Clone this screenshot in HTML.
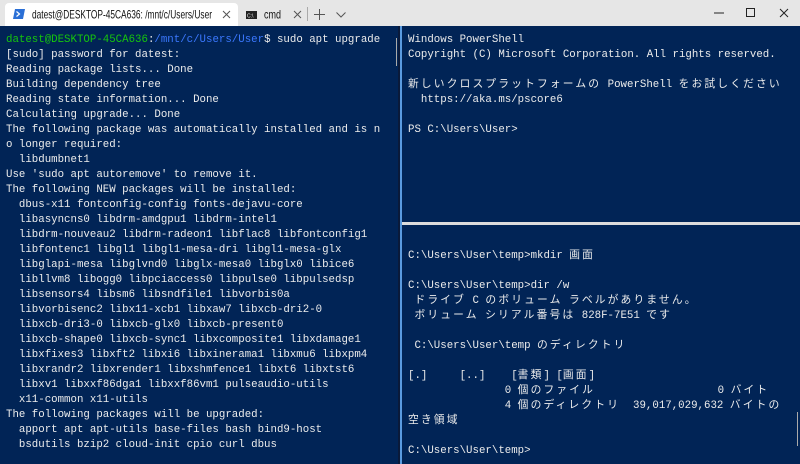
<!DOCTYPE html>
<html><head><meta charset="utf-8"><style>
*{margin:0;padding:0;box-sizing:border-box}
html,body{width:800px;height:464px;overflow:hidden;background:#e8e8e8}
.bar{position:absolute;left:0;top:0;width:800px;height:26px;background:#e6e6e6}
.tab{position:absolute;left:5px;top:3px;width:233px;height:23px;background:#fff;border-radius:4px 4px 0 0}
.pane{position:absolute;background:#012456;overflow:hidden}
pre,.blk{position:absolute;font-family:"Liberation Mono","Noto Sans CJK JP",monospace;font-size:10.75px;line-height:15px;color:#ececec}
pre{white-space:pre}
.blk div{height:15px;white-space:pre}
.j{font-family:"Noto Sans CJK JP",sans-serif;letter-spacing:2.15px;line-height:10px}
.g{color:#16c60c}.b{color:#3b78ff}
</style></head><body>
<div class="bar"></div>
<div class="tab"></div>
<svg style="position:absolute;left:13px;top:9px" width="12" height="10"><polygon points="2,0 12,0 10,10 0,10" fill="#2a6fd6"/><path d="M3.5 2.5 L6.5 5 L3.5 7.5" stroke="#fff" stroke-width="1.2" fill="none"/></svg>
<svg style="position:absolute;left:0;top:0" width="300" height="26">
<text x="32" y="18.5" font-family="Liberation Sans" font-size="12" fill="#111" textLength="180" lengthAdjust="spacingAndGlyphs">datest@DESKTOP-45CA636: /mnt/c/Users/User</text>
<text x="264" y="18.5" font-family="Liberation Sans" font-size="12" fill="#111" textLength="17" lengthAdjust="spacingAndGlyphs">cmd</text>
</svg>
<svg style="position:absolute;left:222px;top:10px" width="9" height="9"><path d="M1 1L8 8M8 1L1 8" stroke="#555" stroke-width="1"/></svg>
<svg style="position:absolute;left:246px;top:11px" width="11" height="8"><rect width="11" height="8" fill="#222"/><text x="1" y="6.5" font-size="5" fill="#fff" font-family="Liberation Sans">C:\</text></svg>
<svg style="position:absolute;left:293px;top:10px" width="9" height="9"><path d="M1 1L8 8M8 1L1 8" stroke="#555" stroke-width="1"/></svg>
<div style="position:absolute;left:307px;top:7px;width:1px;height:14px;background:#aaa"></div>
<svg style="position:absolute;left:314px;top:9px" width="11" height="11"><path d="M5.5 0V11M0 5.5H11" stroke="#555" stroke-width="1"/></svg>
<svg style="position:absolute;left:336px;top:12px" width="10" height="6"><path d="M0.5 0.5L5 5L9.5 0.5" stroke="#555" stroke-width="1" fill="none"/></svg>
<svg style="position:absolute;left:714px;top:12px" width="10" height="2"><path d="M0 1H10" stroke="#222"/></svg>
<svg style="position:absolute;left:745px;top:7px" width="12" height="12"><rect x="1.5" y="1.5" width="8" height="8" stroke="#222" fill="none"/></svg>
<svg style="position:absolute;left:779px;top:8px" width="10" height="10"><path d="M1 1L9 9M9 1L1 9" stroke="#222"/></svg>

<div class="pane" style="left:0;top:26px;width:398px;height:438px"></div>
<div style="position:absolute;left:398px;top:26px;width:2px;height:438px;background:#0a1a3a"></div>
<div style="position:absolute;left:400px;top:26px;width:2px;height:438px;background:#5a9be0"></div>
<div class="pane" style="left:402px;top:26px;width:398px;height:196px"></div>
<div style="position:absolute;left:402px;top:222px;width:398px;height:3px;background:#dcdcdc"></div>
<div class="pane" style="left:402px;top:225px;width:398px;height:239px"></div>
<div style="position:absolute;left:396px;top:38px;width:1px;height:28px;background:#aaa"></div>
<div style="position:absolute;left:797px;top:412px;width:1px;height:34px;background:#aaa"></div>

<pre style="left:6px;top:33px"><span class="g">datest@DESKTOP-45CA636</span>:<span class="b">/mnt/c/Users/User</span>$ sudo apt upgrade
[sudo] password for datest:
Reading package lists... Done
Building dependency tree
Reading state information... Done
Calculating upgrade... Done
The following package was automatically installed and is n
o longer required:
  libdumbnet1
Use 'sudo apt autoremove' to remove it.
The following NEW packages will be installed:
  dbus-x11 fontconfig-config fonts-dejavu-core
  libasyncns0 libdrm-amdgpu1 libdrm-intel1
  libdrm-nouveau2 libdrm-radeon1 libflac8 libfontconfig1
  libfontenc1 libgl1 libgl1-mesa-dri libgl1-mesa-glx
  libglapi-mesa libglvnd0 libglx-mesa0 libglx0 libice6
  libllvm8 libogg0 libpciaccess0 libpulse0 libpulsedsp
  libsensors4 libsm6 libsndfile1 libvorbis0a
  libvorbisenc2 libx11-xcb1 libxaw7 libxcb-dri2-0
  libxcb-dri3-0 libxcb-glx0 libxcb-present0
  libxcb-shape0 libxcb-sync1 libxcomposite1 libxdamage1
  libxfixes3 libxft2 libxi6 libxinerama1 libxmu6 libxpm4
  libxrandr2 libxrender1 libxshmfence1 libxt6 libxtst6
  libxv1 libxxf86dga1 libxxf86vm1 pulseaudio-utils
  x11-common x11-utils
The following packages will be upgraded:
  apport apt apt-utils base-files bash bind9-host
  bsdutils bzip2 cloud-init cpio curl dbus</pre>

<div class="blk" style="left:408px;top:33px"><div>Windows PowerShell</div><div>Copyright (C) Microsoft Corporation. All rights reserved.</div><div> </div><div><span class="j">新しいクロスプラットフォームの</span> PowerShell <span class="j">をお試しください</span></div><div>  https://aka.ms/pscore6</div><div> </div><div>PS C:\Users\User&gt;</div></div>

<div class="blk" style="left:408px;top:234px"><div> </div><div>C:\Users\User\temp&gt;mkdir <span class="j">画面</span></div><div> </div><div>C:\Users\User\temp&gt;dir /w</div><div> <span class="j">ドライブ</span> C <span class="j">のボリューム</span> <span class="j">ラベルがありません。</span></div><div> <span class="j">ボリューム</span> <span class="j">シリアル番号は</span> 828F-7E51 <span class="j">です</span></div><div> </div><div> C:\Users\User\temp <span class="j">のディレクトリ</span></div><div> </div><div>[.]     [..]    [<span class="j">書類</span>] [<span class="j">画面</span>]</div><div>               0 <span class="j">個のファイル</span>                   0 <span class="j">バイト</span></div><div>               4 <span class="j">個のディレクトリ</span>  39,017,029,632 <span class="j">バイトの</span></div><div><span class="j">空き領域</span></div><div> </div><div>C:\Users\User\temp&gt;</div></div>
</body></html>
